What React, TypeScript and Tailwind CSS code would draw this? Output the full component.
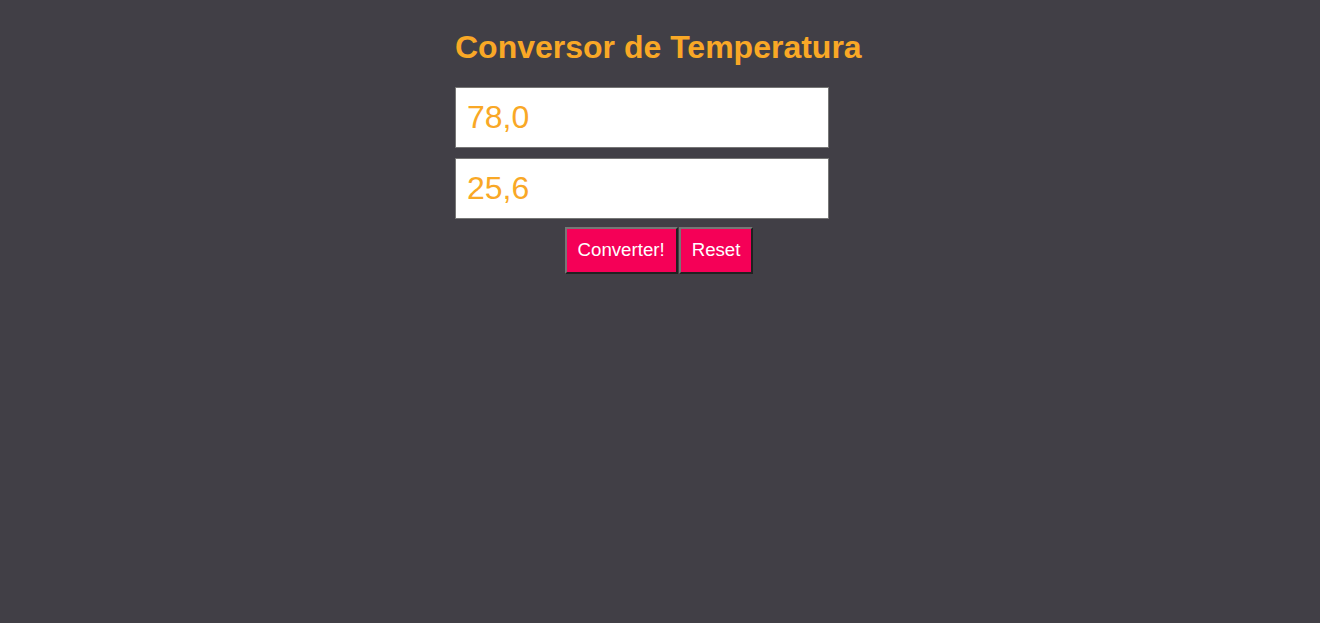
import React, { useState } from 'react';

export default function App() {
  const [fahrenheit, setFahrenheit] = useState('78,0');
  const [celsius, setCelsius] = useState('25,6');

  const converter = () => {
    const f = parseFloat(fahrenheit.replace(',', '.'));
    if (isNaN(f)) return;
    setCelsius(((f - 32) / 1.8).toFixed(1).replace('.', ','));
  };

  const reset = () => {
    setFahrenheit('');
    setCelsius('');
  };

  return (
    <div className="min-h-[623px] w-full bg-[#413f46] font-['Liberation_Sans',Arial,sans-serif]">
      <div className="flex justify-center pt-[29px]">
        <div className="flex w-[410px] flex-col">
          <h1 className="text-[32px] font-bold leading-[37px] text-[#f9a826]">Conversor de Temperatura</h1>

          <input
            value={fahrenheit}
            onChange={(e) => setFahrenheit(e.target.value)}
            className="mt-[21px] h-[61px] w-[374px] border border-[#767676] bg-white pl-[11px] pr-[10px] pb-[1px] text-[32px] text-[#f9a826] outline-none"
          />
          <input
            value={celsius}
            onChange={(e) => setCelsius(e.target.value)}
            className="mt-[10px] h-[61px] w-[374px] border border-[#767676] bg-white pl-[11px] pr-[10px] pb-[1px] text-[32px] text-[#f9a826] outline-none"
          />

          <div className="mt-[8px] flex justify-center gap-[1px] pr-[2px]">
            <button
              onClick={converter}
              className="border-2 border-[#767676] [border-style:outset] bg-[#f50057] px-[11px] pt-[10px] pb-[11px] text-[18.67px] leading-[22px] text-white"
            >
              Converter!
            </button>
            <button
              onClick={reset}
              className="border-2 border-[#767676] [border-style:outset] bg-[#f50057] px-[11px] pt-[10px] pb-[11px] text-[18.67px] leading-[22px] text-white"
            >
              Reset
            </button>
          </div>
        </div>
      </div>
    </div>
  );
}
